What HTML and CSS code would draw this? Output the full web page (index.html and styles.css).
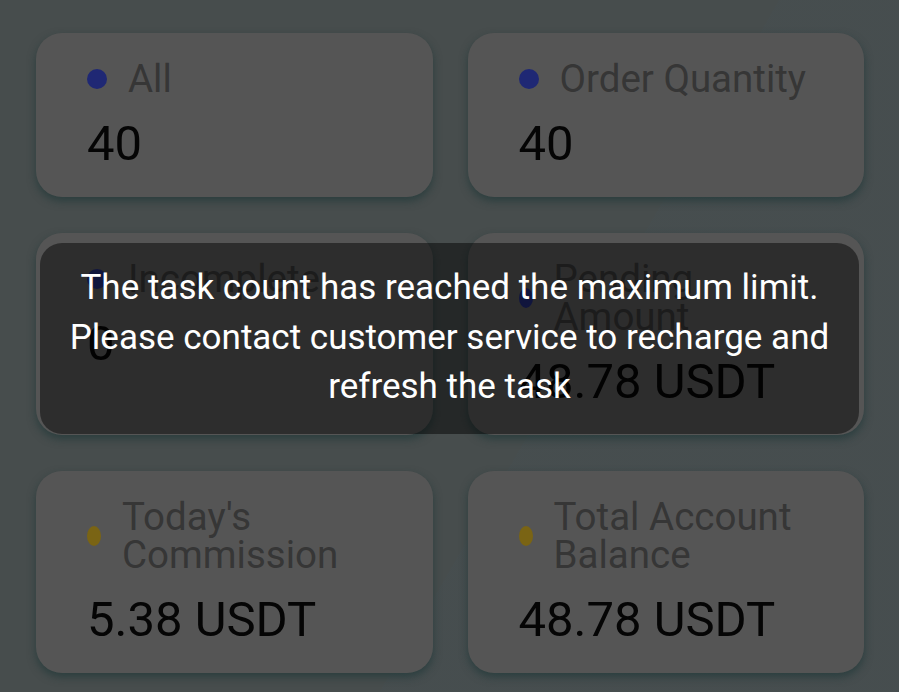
FILE: index.html
```html
<!DOCTYPE html>
<html lang="en">
<head>
<meta charset="utf-8">
<title>Task statistics</title>
<link rel="stylesheet" href="styles.css">
</head>
<body>
<div class="page">
  <div class="grid">
    <div class="card">
      <div class="label-row"><span class="dot dot--blue"></span><span class="label">All</span></div>
      <div class="value">40</div>
    </div>
    <div class="card">
      <div class="label-row"><span class="dot dot--blue"></span><span class="label">Order Quantity</span></div>
      <div class="value">40</div>
    </div>
    <div class="card">
      <div class="label-row"><span class="dot dot--blue"></span><span class="label">Incomplete</span></div>
      <div class="value">0</div>
    </div>
    <div class="card">
      <div class="label-row"><span class="dot dot--blue dot--narrow"></span><span class="label">Pending Amount</span></div>
      <div class="value">48.78 USDT</div>
    </div>
    <div class="card">
      <div class="label-row"><span class="dot dot--yellow dot--narrow"></span><span class="label">Today's Commission</span></div>
      <div class="value">5.38 USDT</div>
    </div>
    <div class="card">
      <div class="label-row"><span class="dot dot--yellow dot--narrow"></span><span class="label">Total Account Balance</span></div>
      <div class="value">48.78 USDT</div>
    </div>
  </div>
  <div class="toast">The task count has reached the maximum limit. Please contact customer service to recharge and refresh the task</div>
</div>
</body>
</html>
```
FILE: styles.css
```css
* { box-sizing: border-box; }
html, body {
  margin: 0;
  padding: 0;
}
body {
  background: #474d4d;
  font-family: Roboto, "Liberation Sans", Arial, sans-serif;
  width: 899px;
  height: 692px;
  overflow: hidden;
}
.page {
  position: relative;
  width: 899px;
  height: 692px;
  background:
    linear-gradient(120deg, rgba(72,76,78,0) 0 60%, rgba(70,78,80,0.6) 60% 100%),
    #474d4d;
}
.grid {
  display: grid;
  grid-template-columns: 1fr 1fr;
  column-gap: 35px;
  row-gap: 36px;
  padding: 33px 35px 0 36px;
}
.card {
  background: #555555;
  border-radius: 26px;
  padding: 27px 51px 25px 51px;
  box-shadow: 0 4px 8px rgba(20, 50, 50, 0.55);
  display: flex;
  flex-direction: column;
  gap: 18px;
}
.label-row {
  display: flex;
  align-items: center;
  gap: 21px;
}
.dot {
  flex: none;
  width: 20px;
  height: 20px;
  border-radius: 50%;
}
.dot--narrow { width: 14px; }
.dot--blue { background: #1f2874; }
.dot--yellow { background: #7a6414; }
.label {
  color: #363636;
  font-size: 38.5px;
  line-height: 38px;
}
.value {
  color: #050505;
  font-size: 49px;
  line-height: 56px;
}
.toast {
  position: absolute;
  left: 40px;
  top: 243px;
  width: 819px;
  padding: 20px 20px 22px;
  border-radius: 22px;
  background: rgba(0, 0, 0, 0.47);
  color: #ffffff;
  font-size: 35px;
  line-height: 49.5px;
  text-align: center;
}
```
